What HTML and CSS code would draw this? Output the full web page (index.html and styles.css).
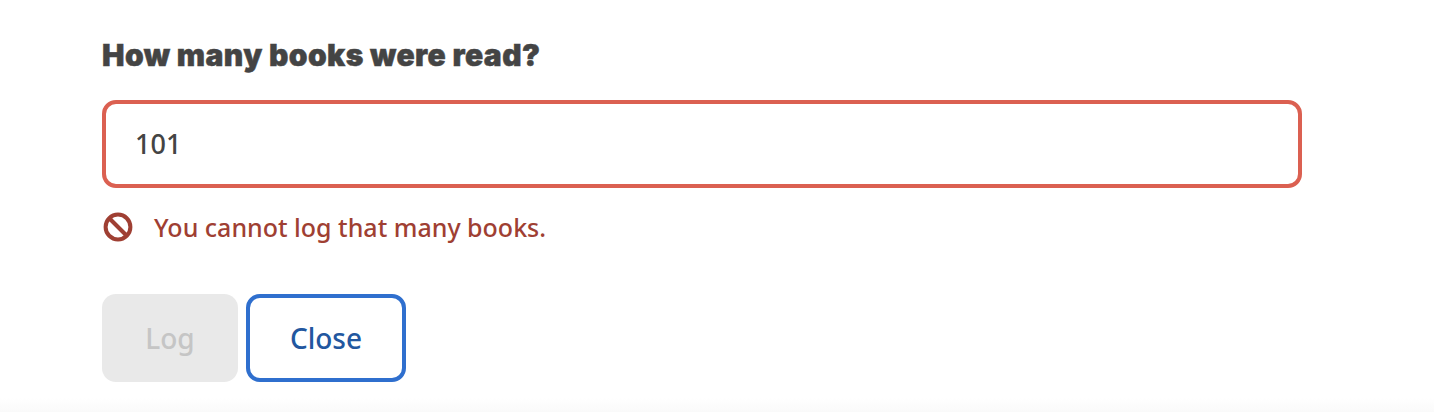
FILE: index.html
```html
<!DOCTYPE html>
<html>
<head>
  <meta charset="utf-8">
  <meta name="viewport" content="width=device-width, initial-scale=1">
  <title>Log books</title>
  <link rel="stylesheet" href="styles.css">
</head>
<body>
<main class="form">
  <label class="label" for="books">How many books were read?</label>
  <input class="field" id="books" type="text" value="101">
  <div class="error">
    <svg class="error-icon" viewBox="0 0 30 30" aria-hidden="true">
      <circle cx="15" cy="15" r="12.4" fill="none" stroke="currentColor" stroke-width="4"/>
      <path d="M6.5 6.5 23.5 23.5" fill="none" stroke="currentColor" stroke-width="4"/>
    </svg>
    <span>You cannot log that many books.</span>
  </div>
  <div class="actions">
    <button class="btn btn-log" disabled>Log</button>
    <button class="btn btn-close">Close</button>
  </div>
</main>
<div class="fade"></div>
</body>
</html>
```

FILE: styles.css
```css
html {
  font-size: 18px;
}

body {
  margin: 0;
  height: 412px;
  overflow: hidden;
  background: #fff;
  color: #444;
  font-family: "Noto Sans", Lato, sans-serif;
  position: relative;
}

.form {
  width: 1200px;
  margin-left: 102px;
  padding-top: 37px;
  display: flex;
  flex-direction: column;
}

.label {
  font-family: Inter, "Noto Sans", sans-serif;
  font-size: 30px;
  line-height: 36px;
  font-weight: 900;
  letter-spacing: 0.4px;
  color: #444;
  -webkit-text-stroke: 0.5px #444;
  margin-bottom: 27px;
}

.field {
  box-sizing: border-box;
  width: 100%;
  height: 88px;
  border: 4px solid #db6051;
  border-radius: 14px;
  padding: 0 29px 2px;
  background: #fff;
  color: #444;
  font-family: "Noto Sans", Lato, sans-serif;
  font-size: 27px;
  font-weight: 500;
  outline: none;
}

.error {
  display: flex;
  align-items: center;
  gap: 21px;
  margin-top: 21px;
  height: 36px;
  color: #9f3f33;
  font-size: 25px;
  font-weight: 500;
}

.error-icon {
  width: 30px;
  height: 30px;
  flex: none;
  margin-left: 1px;
}

.actions {
  display: flex;
  gap: 8px;
  margin-top: 49px;
}

.btn {
  box-sizing: border-box;
  height: 88px;
  border-radius: 14px;
  font-family: "Noto Sans", Lato, sans-serif;
  font-size: 28px;
  font-weight: 550;
  padding: 0;
}

.btn-log {
  width: 136px;
  border: 0;
  background: #e9e9e9;
  color: #c5c5c5;
}

.btn-close {
  width: 160px;
  border: 4px solid #2f6fce;
  background: #fff;
  color: #22579f;
}

.fade {
  position: absolute;
  left: 0;
  right: 0;
  bottom: 0;
  height: 14px;
  background: linear-gradient(#fff, #fafafa);
}
```
